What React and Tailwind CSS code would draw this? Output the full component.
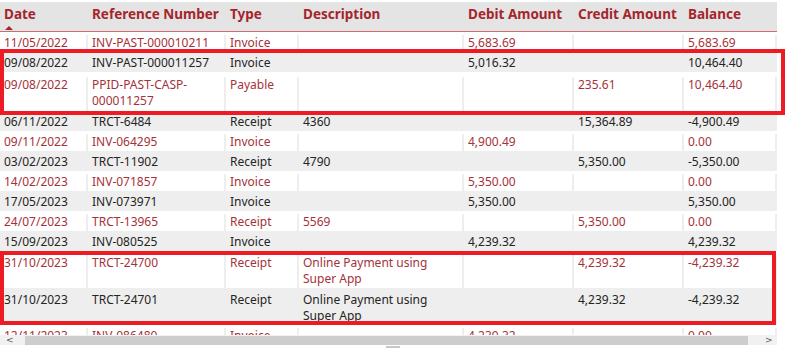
const columns = [
  { key: 'date', label: 'Date', width: 'w-[88px]' },
  { key: 'ref', label: 'Reference Number', width: 'w-[138px]' },
  { key: 'type', label: 'Type', width: 'w-[73px]' },
  { key: 'desc', label: 'Description', width: 'w-[165px]' },
  { key: 'debit', label: 'Debit Amount', width: 'w-[110px]' },
  { key: 'credit', label: 'Credit Amount', width: 'w-[110px]' },
  { key: 'balance', label: 'Balance', width: 'w-[93px]' },
];

const rows = [
  { date: '11/05/2022', ref: 'INV-PAST-000010211', type: 'Invoice', desc: '', debit: '5,683.69', credit: '', balance: '5,683.69' },
  { date: '09/08/2022', ref: 'INV-PAST-000011257', type: 'Invoice', desc: '', debit: '5,016.32', credit: '', balance: '10,464.40' },
  { date: '09/08/2022', ref: 'PPID-PAST-CASP-\n000011257', type: 'Payable', desc: '', debit: '', credit: '235.61', balance: '10,464.40', h: 'h-[39px] pt-[5px]' },
  { date: '06/11/2022', ref: 'TRCT-6484', type: 'Receipt', desc: '4360', debit: '', credit: '15,364.89', balance: '-4,900.49' },
  { date: '09/11/2022', ref: 'INV-064295', type: 'Invoice', desc: '', debit: '4,900.49', credit: '', balance: '0.00' },
  { date: '03/02/2023', ref: 'TRCT-11902', type: 'Receipt', desc: '4790', debit: '', credit: '5,350.00', balance: '-5,350.00' },
  { date: '14/02/2023', ref: 'INV-071857', type: 'Invoice', desc: '', debit: '5,350.00', credit: '', balance: '0.00' },
  { date: '17/05/2023', ref: 'INV-073971', type: 'Invoice', desc: '', debit: '5,350.00', credit: '', balance: '5,350.00' },
  { date: '24/07/2023', ref: 'TRCT-13965', type: 'Receipt', desc: '5569', debit: '', credit: '5,350.00', balance: '0.00' },
  { date: '15/09/2023', ref: 'INV-080525', type: 'Invoice', desc: '', debit: '4,239.32', credit: '', balance: '4,239.32' },
  { date: '31/10/2023', ref: 'TRCT-24700', type: 'Receipt', desc: 'Online Payment using\nSuper App', debit: '', credit: '4,239.32', balance: '-4,239.32', h: 'h-[37px] pt-[4px]' },
  { date: '31/10/2023', ref: 'TRCT-24701', type: 'Receipt', desc: 'Online Payment using\nSuper App', debit: '', credit: '4,239.32', balance: '-4,239.32', h: 'h-[37px] pt-[4px]' },
  { date: '12/11/2023', ref: 'INV-086480', type: 'Invoice', desc: '', debit: '4,239.32', credit: '', balance: '0.00' },
];

const App = () => {
  return (
    <div className="relative w-[807px] h-[348px] overflow-hidden bg-white font-['Noto_Sans',sans-serif]">
      <div className="w-[777px] pt-[2px]">

        {/* header */}
        <div className="flex h-[30px] bg-[#e4e4e4] border-b border-[#cf6b70]">
          {columns.map((col) => (
            <div key={col.key} className={`${col.width} shrink-0 pl-[4px] pt-[3px]`}>
              <div className="text-[13.5px] leading-[18px] font-bold text-[#a4262c] whitespace-nowrap">
                {col.label}
              </div>
              {col.key === 'date' && (
                <div className="ml-[1px] mt-[3px] w-0 h-0 border-l-[4px] border-r-[4px] border-b-[4px] border-l-transparent border-r-transparent border-b-[#a4262c]"></div>
              )}
            </div>
          ))}
        </div>

        {/* body */}
        <div className="h-[303px] overflow-hidden">
          {rows.map((row, i) => {
            const odd = i % 2 === 0;
            return (
              <div
                key={i}
                className={`flex ${row.h || 'h-[20px] pt-[3px]'} ${odd ? 'bg-white text-[#a5323a]' : 'bg-[#eeeeee] text-[#252423]'}`}
              >
                {columns.map((col) => (
                  <div
                    key={col.key}
                    className={`${col.width} shrink-0 pl-[4px] border-r-2 border-[#eeeeee] text-[12px] leading-[16px] whitespace-pre-line`}
                  >
                    {row[col.key]}
                  </div>
                ))}
              </div>
            );
          })}
        </div>

        {/* horizontal scrollbar */}
        <div className="flex items-center h-[10px] bg-[#f1f1f1] text-[#555] text-[9px] leading-[9px] font-['DejaVu_Sans',sans-serif]">
          <div className="w-[25px] pl-[6px]">&lt;</div>
          <div className="w-[723px] h-[9px] bg-[#cdcdcd]"></div>
          <div className="flex-1 pl-[17px]">&gt;</div>
        </div>
      </div>

      <div className="ml-[386px] mt-[1px] w-[14px] h-[3px] bg-[#c8c8c8]"></div>

      {/* red annotation boxes */}
      <div className="absolute left-0 top-[49px] w-[785px] h-[66px] border-4 border-[#ed1c24]"></div>
      <div className="absolute left-0 top-[251px] w-[776px] h-[74px] border-4 border-[#ed1c24]"></div>
    </div>
  );
};

export default App;
